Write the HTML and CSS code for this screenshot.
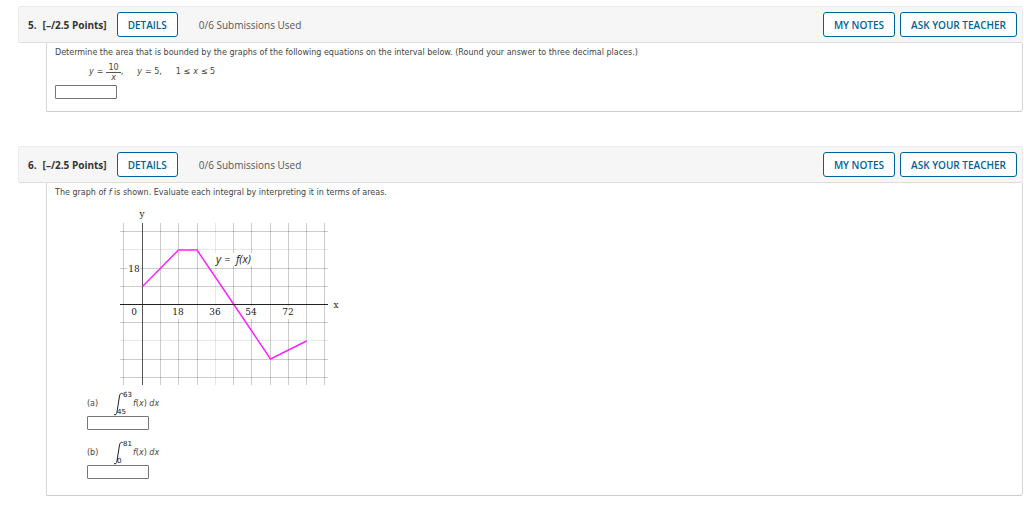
FILE: index.html
```html
<!DOCTYPE html>
<html lang="en">
<head>
<meta charset="utf-8">
<title>Assignment</title>
<link rel="stylesheet" href="styles.css">
</head>
<body>
<main class="assignment">
  <section class="question">
    <header class="bar">
      <h2 class="title"><span>5.</span><span>[–/2.5 Points]</span></h2>
      <button class="btn" type="button">DETAILS</button>
      <span class="used">0/6 Submissions Used</span>
      <div class="actions">
        <button class="btn" type="button">MY NOTES</button>
        <button class="btn" type="button">ASK YOUR TEACHER</button>
      </div>
    </header>
    <div class="content content-short">
      <p class="prompt">Determine the area that is bounded by the graphs of the following equations on the interval below. (Round your answer to three decimal places.)</p>
      <div class="equations">
        <span class="eq"><i>y</i> = <span class="term"><span class="frac"><span class="num">10</span><i class="den">x</i></span>,</span></span>
        <span class="eq"><i>y</i> = 5,</span>
        <span class="eq">1 ≤ <i>x</i> ≤ 5</span>
      </div>
      <input class="answer" type="text" aria-label="Area">
    </div>
  </section>

  <section class="question">
    <header class="bar">
      <h2 class="title"><span>6.</span><span>[–/2.5 Points]</span></h2>
      <button class="btn" type="button">DETAILS</button>
      <span class="used">0/6 Submissions Used</span>
      <div class="actions">
        <button class="btn" type="button">MY NOTES</button>
        <button class="btn" type="button">ASK YOUR TEACHER</button>
      </div>
    </header>
    <div class="content content-tall">
      <p class="prompt">The graph of <i>f</i> is shown. Evaluate each integral by interpreting it in terms of areas.</p>
      <svg class="graph" width="230" height="180" viewBox="0 0 230 180" role="img" aria-label="Graph of y = f(x)">
        <path class="grid" d="M3.5 17V179M40.5 17V179M58.5 17V179M77.5 17V179M113.5 17V179M131.5 17V179M150.5 17V179M168.5 17V179M186.5 17V179M204.5 17V179M0 25.5H208M0 62.5H208M0 80.5H208M0 116.5H208M0 153.5H208M0 171.5H208"/>
        <path class="grid grid-light" d="M95.5 17V179M0 43.5H208M0 134.5H208"/>
        <path class="mask" d="M7 57h13v11h-13zM51 100h14v13h-14zM88 100h14v13h-14zM124 100h14v13h-14zM161 100h14v13h-14zM94 47h38v13h-38z"/>
        <path class="axis-y" d="M22.5 17V179"/>
        <path class="curve" d="M22.5 80.5L58.5 44H77L113.5 98L150.5 153L186.5 135"/>
        <path class="axis-x" d="M0 98.500H208"/>
        <g class="labels">
          <text x="22" y="11">y</text>
          <text x="216" y="102">x</text>
          <text x="14" y="66">18</text>
          <text x="14" y="109">0</text>
          <text x="58" y="109">18</text>
          <text x="95" y="109">36</text>
          <text x="131" y="109">54</text>
          <text x="168" y="109">72</text>
        </g>
        <text class="name" x="96" y="57">y = &nbsp;f(x)</text>
      </svg>
      <div class="part">
        <div class="integral-row">
          <span class="letter">(a)</span>
          <span class="integral">
            <svg width="11" height="24" viewBox="0 0 11 24" aria-hidden="true"><path class="sign" d="M10 2C8.500 .5 7 1.500 6.500 4L4 20C3.500 22.500 2.500 23.500 1 22.500"/></svg>
            <span class="limits"><span class="upper">63</span><span class="lower">45</span></span>
          </span>
          <span><i>f</i>(<i>x</i>) <i>dx</i></span>
        </div>
        <input class="answer" type="text" aria-label="Part a">
      </div>
      <div class="part">
        <div class="integral-row">
          <span class="letter">(b)</span>
          <span class="integral">
            <svg width="11" height="24" viewBox="0 0 11 24" aria-hidden="true"><path class="sign" d="M10 2C8.500 .5 7 1.500 6.500 4L4 20C3.500 22.500 2.500 23.500 1 22.500"/></svg>
            <span class="limits"><span class="upper">81</span><span class="lower">0</span></span>
          </span>
          <span><i>f</i>(<i>x</i>) <i>dx</i></span>
        </div>
        <input class="answer" type="text" aria-label="Part b">
      </div>
    </div>
  </section>
</main>
</body>
</html>
```
FILE: styles.css
```css
* { box-sizing: border-box; }

body {
  margin: 0;
  background: #fff;
  color: #444;
  font-family: "DejaVu Sans", Verdana, sans-serif;
  font-size: 8px;
  line-height: 12px;
}

.assignment {
  display: flex;
  flex-direction: column;
  gap: 34px;
  padding: 6px 1px 10px 18px;
}

.bar {
  display: flex;
  align-items: center;
  padding: 5px 5px 5px 9px;
  background: #f6f6f6;
  border: 1px solid #ececec;
  border-bottom-color: #dedede;
  border-radius: 2px;
  font-family: "Open Sans", sans-serif;
  font-size: 10px;
}

.title {
  display: flex;
  gap: 6px;
  margin: 0 10px 0 0;
  color: #333;
  font-size: 10px;
  font-weight: 700;
}

.btn {
  height: 25px;
  padding: 0 10px;
  background: #fff;
  border: 1px solid #006298;
  border-radius: 3px;
  color: #006298;
  font: 600 10px/12px "Open Sans", sans-serif;
}

.used {
  margin-left: 21px;
  color: #555;
}

.actions {
  display: flex;
  gap: 5px;
  margin-left: auto;
}

.content {
  display: flex;
  flex-direction: column;
  align-items: flex-start;
  margin-left: 28px;
  padding: 4px 8px 0;
  border: 1px solid #d8d8d8;
  border-top: 0;
  border-bottom-color: #ccc;
  border-bottom-right-radius: 3px;
}

.content-short { padding-bottom: 12px; }
.content-tall { padding-bottom: 16px; }

.prompt { margin: 0; }

.equations {
  display: flex;
  align-items: center;
  gap: 14px;
  height: 26px;
  margin-left: 34px;
}

.eq {
  display: flex;
  align-items: center;
  gap: 3px;
}

.term {
  display: flex;
  align-items: center;
}

.frac {
  display: flex;
  flex-direction: column;
  align-items: center;
  line-height: 9px;
}

.num {
  padding: 0 2px;
  border-bottom: 1px solid #555;
}

.answer {
  display: block;
  width: 62px;
  height: 14px;
  padding: 0 2px;
  background: #fff;
  border: 1px solid #767676;
  border-radius: 1px;
  font: inherit;
}

.graph {
  margin: 7px 0 0 65px;
}

.graph path { fill: none; }
.graph .grid { stroke: #000; stroke-opacity: .2; }
.graph .grid-light { stroke-opacity: .09; }
.graph .mask { fill: #fff; }
.graph .axis-y { stroke: #555; }
.graph .axis-x { stroke: #222; }
.graph .curve { stroke: #f2f; stroke-width: 1.5; }

.labels {
  fill: #222;
  font: 9px "DejaVu Serif", serif;
  text-anchor: middle;
}

.name {
  fill: #222;
  font: italic 11px "Open Sans", sans-serif;
}

.part { margin: 5px 0 0 32px; }
.part + .part { margin-top: 10px; }

.integral-row {
  display: flex;
  align-items: center;
  height: 25px;
}

.letter { width: 26px; }

.integral {
  display: flex;
  width: 20px;
}

.sign {
  fill: none;
  stroke: #222;
}

.limits {
  display: flex;
  flex-direction: column;
  justify-content: space-between;
  margin-left: -1px;
  color: #111;
  font-size: 7px;
  line-height: 7px;
}

.lower { margin-left: -6px; }
```
